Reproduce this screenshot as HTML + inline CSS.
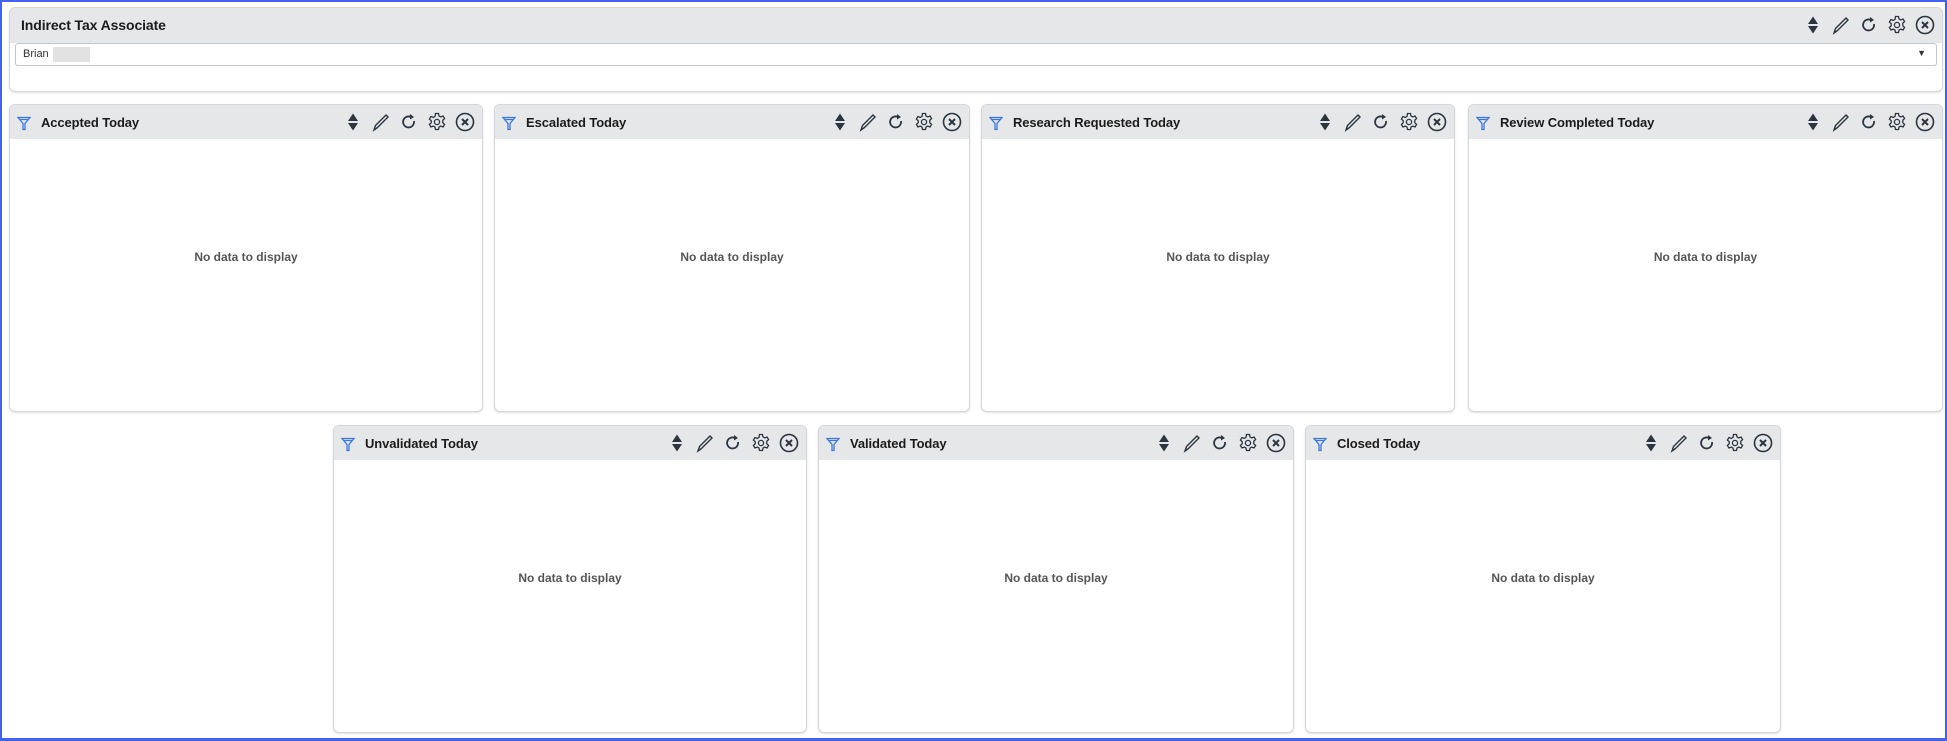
<!DOCTYPE html>
<html><head><meta charset="utf-8"><style>
*{box-sizing:border-box;margin:0;padding:0}
body{width:1947px;height:741px;background:#fff;font-family:"Liberation Sans",sans-serif;position:relative;overflow:hidden}
.frame{position:absolute;left:0;top:0;width:1947px;height:741px;border:2px solid #4561f0;border-bottom-width:3px}
.p{position:absolute;background:#fff;border:1px solid #d4d6d9;border-radius:6px;box-shadow:0 1px 2px rgba(0,0,0,.12);overflow:hidden}
.h{height:34px;background:#e6e7e9;position:relative}
.t{position:absolute;left:31px;top:10px;font-size:13px;font-weight:bold;color:#1b1b1b;letter-spacing:-.1px}
.f{position:absolute;left:7px;top:11px}
.ic{position:absolute;right:7px;top:7px;display:flex;gap:8px;align-items:center}
.ic svg{width:20px;height:20px}
.nd{position:absolute;left:0;right:0;text-align:center;font-size:12px;font-weight:bold;color:#555}
</style></head><body>
<div class="frame"></div>
<div class="p" style="left:9px;top:7px;width:1934px;height:85px">
 <div class="h" style="height:35px"><div class="t" style="left:11px;top:9px;font-size:14px">Indirect Tax Associate</div>
 <div class="ic" style="top:7px"></div></div>
 <div style="position:absolute;left:5px;top:35px;width:1922px;height:23px;border:1px solid #c4c6c8;border-radius:3px;background:#fff">
  <span style="position:absolute;left:7px;top:4px;font-size:11px;color:#333">Brian</span>
  <span style="position:absolute;left:37px;top:3px;width:37px;height:15px;background:#e2e2e2"></span>
  <span style="position:absolute;right:10px;top:4px;font-size:9px;color:#333">▼</span>
 </div>
</div>
<div id="wrap"></div>
<script>
const icons=`<svg viewBox="0 0 20 20"><path d="M10 1.5 L15 9 H5Z M10 18.5 L15 11 H5Z" fill="#2b3540"/></svg>
<svg viewBox="0 0 20 20" fill="none" stroke="#2b3540" stroke-width="1.4"><path d="M3 18 L4.5 13.5 L15 3 L17 5 L6.5 15.5 Z M3 18 L6.5 15.5"/></svg>
<svg viewBox="0 0 20 20" fill="none" stroke="#2b3540" stroke-width="1.8"><path d="M15 9 A5.5 5.5 0 1 1 12 5"/><path d="M11 2 L15 5 L11 7.5Z" fill="#2b3540" stroke="none"/></svg>
<svg viewBox="0 0 20 20" fill="none" stroke="#2b3540" stroke-width="1.3"><path d="M8.5 1.5h3l.5 2.4 1.8 1 2.3-.9 1.5 2.6-1.8 1.6v2.6l1.8 1.6-1.5 2.6-2.3-.9-1.8 1-.5 2.4h-3l-.5-2.4-1.8-1-2.3.9-1.5-2.6 1.8-1.6V8.7L2.4 7.1l1.5-2.6 2.3.9 1.8-1z"/><circle cx="10" cy="10" r="2.6"/></svg>
<svg viewBox="0 0 20 20" fill="none" stroke="#2b3540" stroke-width="1.6"><circle cx="10" cy="10" r="8.5"/><path d="M7 7 L13 13 M13 7 L7 13" stroke-width="2"/></svg>`;
document.querySelector('.ic').innerHTML=icons;
const funnel=`<svg class="f" width="14" height="15" viewBox="0 0 14 15" fill="none" stroke="#3a78e0" stroke-width="1.3"><path d="M1 1.5 H13 L8 7.5 V13.5 H6 V7.5 Z"/><path d="M3 3.5 H11"/></svg>`;
const P=[[9,104,474,308,"Accepted Today"],[494,104,476,308,"Escalated Today"],[981,104,474,308,"Research Requested Today"],[1468,104,475,308,"Review Completed Today"],
[333,425,474,308,"Unvalidated Today"],[818,425,476,308,"Validated Today"],[1305,425,476,308,"Closed Today"]];
let h='';
for(const [x,y,w,hh,t] of P){h+=`<div class="p" style="left:${x}px;top:${y}px;width:${w}px;height:${hh}px"><div class="h">${funnel}<div class="t">${t}</div><div class="ic">${icons}</div></div><div class="nd" style="top:145px">No data to display</div></div>`;}
document.getElementById('wrap').innerHTML=h;
</script>
</body></html>
